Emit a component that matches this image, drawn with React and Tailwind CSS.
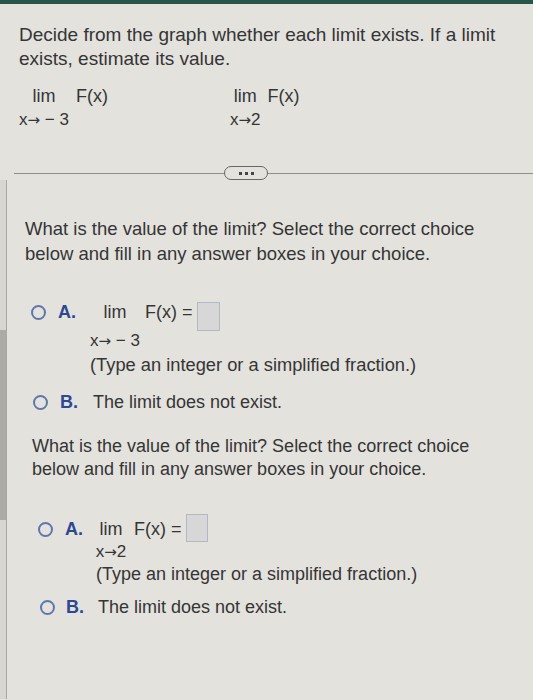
const FONT = "font-['Liberation_Sans',Arial,sans-serif]"

function Radio({ className = '' }) {
  return <span className={`block shrink-0 w-[15px] h-[15px] rounded-full border-2 border-[#5f78ab] ${className}`} />
}

function AnswerBox({ className = '' }) {
  return <span className={`block shrink-0 bg-[#d6d7d6] border border-[#b3b8c2] ${className}`} />
}

// arrow glyph is missing from Liberation Sans, take it from DejaVu
function Arrow() {
  return <span className="font-['DejaVu_Sans',sans-serif] text-[15px]">→</span>
}

export default function App() {
  return (
    <div className={`${FONT} w-[533px] h-[700px] overflow-hidden bg-[#e3e2dd] text-[#353535]`}>
      <div className="h-[4px] bg-[#24564a]" />

      {/* Instructions */}
      <div className="pt-[19px] pl-[19px]">
        <p className="text-[19px] leading-[24px]">
          Decide from the graph whether each limit exists. If a limit<br />
          exists, estimate its value.
        </p>
        <div className="mt-[13px] flex items-start text-[18px]">
          <div className="w-[211px] flex items-start">
            <div className="flex flex-col items-center">
              <span className="leading-[24px]">lim</span>
              <span className="leading-[24px] text-[17px] whitespace-nowrap">x<Arrow /> − 3</span>
            </div>
            <span className="ml-[7px] leading-[24px]">F(x)</span>
          </div>
          <div className="flex items-start">
            <div className="flex flex-col items-center">
              <span className="leading-[24px]">lim</span>
              <span className="leading-[24px] text-[17px] whitespace-nowrap">x<Arrow />2</span>
            </div>
            <span className="ml-[7px] leading-[24px]">F(x)</span>
          </div>
        </div>
      </div>

      {/* Divider */}
      <div className="mt-[34px] pl-[14px] flex items-center">
        <div className="w-[210px] h-px bg-[#8d8d8b]" />
        <div className="w-[44px] h-[14px] rounded-full border-[1.5px] border-[#666] flex items-center justify-center gap-[3px]">
          <span className="w-[3px] h-[3px] bg-[#444]" />
          <span className="w-[3px] h-[3px] bg-[#444]" />
          <span className="w-[3px] h-[3px] bg-[#444]" />
        </div>
        <div className="flex-1 h-px bg-[#8d8d8b]" />
      </div>

      <div className="flex h-[519px]">
        {/* Scroll strip */}
        <div className="w-[7px] shrink-0 bg-[#d7d6d1] border-r border-[#a9a9a4] flex flex-col">
          <div className="mt-[150px] h-[190px] bg-[#acaba6]" />
        </div>

        <div className="flex-1">
          {/* Question 1 */}
          <p className="mt-[36px] ml-[18px] text-[18.5px] leading-[25px]">
            What is the value of the limit? Select the correct choice<br />
            below and fill in any answer boxes in your choice.
          </p>

          <div className="mt-[34px] ml-[24px] flex items-start text-[18px]">
            <Radio className="mt-[4.5px]" />
            <span className="ml-[12px] w-[32px] leading-[24px] font-bold text-[#2c4796]">A.</span>
            <div>
              <div className="flex items-start">
                <div className="w-[50px] flex flex-col items-center">
                  <span className="leading-[24px]">lim</span>
                  <span className="mt-[6px] leading-[22px] text-[17px] whitespace-nowrap">x<Arrow /> − 3</span>
                </div>
                <span className="ml-[5px] leading-[24px]">F(x) =</span>
                <AnswerBox className="ml-[4px] mt-[2px] w-[23px] h-[29px]" />
              </div>
              <p className="mt-[1px] text-[18.3px] leading-[24px]">(Type an integer or a simplified fraction.)</p>
            </div>
          </div>

          <div className="mt-[13px] ml-[26px] flex items-start text-[18px]">
            <Radio className="mt-[4.5px]" />
            <span className="ml-[12px] w-[33px] leading-[24px] font-bold text-[#2c4796]">B.</span>
            <span className="leading-[24px]">The limit does not exist.</span>
          </div>

          {/* Question 2 */}
          <p className="mt-[21px] ml-[25px] text-[18px] leading-[23px]">
            What is the value of the limit? Select the correct choice<br />
            below and fill in any answer boxes in your choice.
          </p>

          <div className="mt-[36px] ml-[31px] flex items-start text-[18px]">
            <Radio className="mt-[4.5px]" />
            <span className="ml-[12px] w-[31px] leading-[24px] font-bold text-[#2c4796]">A.</span>
            <div>
              <div className="flex items-start">
                <div className="w-[30px] flex flex-col items-center">
                  <span className="leading-[24px]">lim</span>
                  <span className="leading-[22px] text-[17px] whitespace-nowrap">x<Arrow />2</span>
                </div>
                <span className="ml-[8px] leading-[24px]">F(x) =</span>
                <AnswerBox className="ml-[4px] -mt-[3px] w-[22px] h-[28px]" />
              </div>
              <p className="leading-[22px]">(Type an integer or a simplified fraction.)</p>
            </div>
          </div>

          <div className="mt-[10px] ml-[33px] flex items-start text-[18px]">
            <Radio className="mt-[4.5px]" />
            <span className="ml-[11px] w-[32px] leading-[24px] font-bold text-[#2c4796]">B.</span>
            <span className="leading-[24px]">The limit does not exist.</span>
          </div>
        </div>
      </div>
    </div>
  )
}
